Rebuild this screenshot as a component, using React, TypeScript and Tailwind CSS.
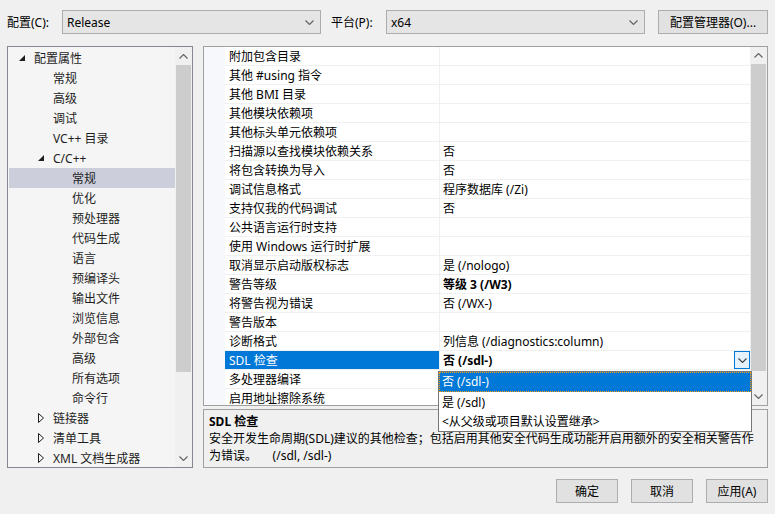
import React from 'react';

const Chevron = ({ up = false, color = '#606060' }: { up?: boolean; color?: string }) => (
    <svg width="9" height="5" viewBox="0 0 9 5" className={up ? 'rotate-180' : ''}>
        <polyline points="0.5,0.5 4.5,4.5 8.5,0.5" fill="none" stroke={color} strokeWidth="1.1" />
    </svg>
);

const Expanded = () => (
    <svg width="6" height="6" viewBox="0 0 6 6">
        <polygon points="6,0 6,6 0,6" fill="#1e1e1e" />
    </svg>
);

const Collapsed = () => (
    <svg width="6" height="10" viewBox="0 0 6 10">
        <polygon points="0.5,0.5 5.5,5 0.5,9.5" fill="none" stroke="#1e1e1e" strokeWidth="1" />
    </svg>
);

type TreeItem = { label: string; level: number; state?: 'open' | 'closed'; selected?: boolean };

const tree: TreeItem[] = [
    { label: '配置属性', level: 0, state: 'open' },
    { label: '常规', level: 1 },
    { label: '高级', level: 1 },
    { label: '调试', level: 1 },
    { label: 'VC++ 目录', level: 1 },
    { label: 'C/C++', level: 1, state: 'open' },
    { label: '常规', level: 2, selected: true },
    { label: '优化', level: 2 },
    { label: '预处理器', level: 2 },
    { label: '代码生成', level: 2 },
    { label: '语言', level: 2 },
    { label: '预编译头', level: 2 },
    { label: '输出文件', level: 2 },
    { label: '浏览信息', level: 2 },
    { label: '外部包含', level: 2 },
    { label: '高级', level: 2 },
    { label: '所有选项', level: 2 },
    { label: '命令行', level: 2 },
    { label: '链接器', level: 1, state: 'closed' },
    { label: '清单工具', level: 1, state: 'closed' },
    { label: 'XML 文档生成器', level: 1, state: 'closed' },
];

const props: { name: string; value?: string; bold?: boolean }[] = [
    { name: '附加包含目录' },
    { name: '其他 #using 指令' },
    { name: '其他 BMI 目录' },
    { name: '其他模块依赖项' },
    { name: '其他标头单元依赖项' },
    { name: '扫描源以查找模块依赖关系', value: '否' },
    { name: '将包含转换为导入', value: '否' },
    { name: '调试信息格式', value: '程序数据库 (/Zi)' },
    { name: '支持仅我的代码调试', value: '否' },
    { name: '公共语言运行时支持' },
    { name: '使用 Windows 运行时扩展' },
    { name: '取消显示启动版权标志', value: '是 (/nologo)' },
    { name: '警告等级', value: '等级 3 (/W3)', bold: true },
    { name: '将警告视为错误', value: '否 (/WX-)' },
    { name: '警告版本' },
    { name: '诊断格式', value: '列信息 (/diagnostics:column)' },
    { name: 'SDL 检查', value: '否 (/sdl-)', bold: true },
    { name: '多处理器编译' },
    { name: '启用地址擦除系统' },
];

const indent = ['pl-[10px]', 'pl-[29px]', 'pl-[48px]'];

function Combo({ text }: { text: string }) {
    return (
        <div className="w-[259px] h-[24px] bg-[#e5e5e5] border border-[#adadad] flex items-center pl-[4px] pr-[6px]">
            <span className="flex-1 pt-[2px]">{text}</span>
            <Chevron />
        </div>
    );
}

function Scrollbar({ topArrow, thumb, rest }: { topArrow: string; thumb: string; rest: string }) {
    return (
        <div className="w-[17px] h-full bg-[#f0f0f0] flex flex-col">
            <div className={`${topArrow} flex items-center justify-center`}>
                <Chevron up />
            </div>
            <div className={`${thumb} mx-[1px] bg-[#cdcdcd]`} />
            <div className={`${rest} flex items-end justify-center pb-[6px]`}>
                <Chevron />
            </div>
        </div>
    );
}

function Button({ label, w = 'w-[110px]' }: { label: string; w?: string }) {
    return (
        <div className={`${w} h-[24px] bg-[#e1e1e1] border border-[#adadad] flex items-center justify-center pt-[2px]`}>
            {label}
        </div>
    );
}

export default function App() {
    return (
        <div className="relative w-[775px] h-[514px] overflow-hidden bg-[#f0f0f0] text-[12px] text-black font-['Noto_Sans','Noto_Sans_CJK_SC',sans-serif]">
            {/* top bar */}
            <div className="flex items-center pt-[10px] h-[34px] pl-[7px]">
                <span className="w-[55px] pt-[2px]">配置(C):</span>
                <Combo text="Release" />
                <span className="w-[55px] ml-[10px] pt-[2px]">平台(P):</span>
                <Combo text="x64" />
                <div className="ml-[13px]">
                    <Button label="配置管理器(O)..." />
                </div>
            </div>

            {/* main */}
            <div className="flex mt-[12px] pl-[7px] h-[422px]">
                {/* tree */}
                <div className="w-[186px] h-full border border-[#828790] bg-[#f5f5f5] flex overflow-hidden">
                    <div className="flex-1 pl-[1px] pt-[1px] text-[#1e1e1e]">
                        {tree.map((t, i) => (
                            <div
                                key={i}
                                className={`h-[20px] flex items-center ${indent[t.level]} ${t.selected ? 'bg-[#cccedb]' : ''}`}
                            >
                                <span className="w-[15px] flex items-center">
                                    {t.state === 'open' && <Expanded />}
                                    {t.state === 'closed' && <Collapsed />}
                                </span>
                                <span className="leading-[18px] pt-[2px]">{t.label}</span>
                            </div>
                        ))}
                    </div>
                    <Scrollbar topArrow="h-[18px]" thumb="h-[307px]" rest="flex-1" />
                </div>

                {/* right */}
                <div className="ml-[10px] w-[565px] h-full flex flex-col">
                    <div className="h-[360px] border border-[#a0a0a0] bg-white flex overflow-hidden">
                        <div className="flex-1 flex">
                            <div className="w-[21px] bg-[#f7f8fc]" />
                            <div className="flex-1">
                                {props.map((p, i) => {
                                    const sel = p.name === 'SDL 检查';
                                    return (
                                        <div key={i} className="h-[19px] flex border-b border-[#f0f0f0]">
                                            <div className={`w-[214px] pl-[4px] pt-[2px] leading-[16px] ${sel ? 'bg-[#0078d7] text-white' : ''}`}>
                                                {p.name}
                                            </div>
                                            <div className="w-[1px] bg-[#f0f0f0]" />
                                            <div className={`flex-1 pl-[3px] flex ${p.bold ? 'font-bold' : ''}`}>
                                                <span className="flex-1 pt-[2px] leading-[16px]">{p.value}</span>
                                                {sel && (
                                                    <div className="w-[16px] h-[18px] border border-[#0078d7] bg-[#e5f1fb] flex items-center justify-center">
                                                        <Chevron color="#404040" />
                                                    </div>
                                                )}
                                            </div>
                                        </div>
                                    );
                                })}
                            </div>
                        </div>
                        <Scrollbar topArrow="h-[17px]" thumb="h-[307px]" rest="flex-1" />
                    </div>

                    <div className="mt-[3px] flex-1 border border-[#a0a0a0] bg-[#f0f0f0] px-[5px] pt-[3px] leading-[17px]">
                        <div className="font-bold">SDL 检查</div>
                        <div>安全开发生命周期(SDL)建议的其他检查；包括启用其他安全代码生成功能并启用额外的安全相关警告作</div>
                        <div className="whitespace-pre">为错误。     (/sdl, /sdl-)</div>
                    </div>
                </div>
            </div>

            {/* buttons */}
            <div className="flex justify-end gap-[13px] pr-[7px] mt-[11px]">
                <Button label="确定" w="w-[62px]" />
                <Button label="取消" w="w-[62px]" />
                <Button label="应用(A)" w="w-[62px]" />
            </div>

            {/* dropdown list */}
            <div className="absolute left-[438px] top-[371px] w-[314px] h-[61px] border border-[#767676] bg-white">
                <div className="h-[20px] leading-[16px] pt-[1px] pl-[2px] bg-[#0078d7] text-white border border-dotted border-[#f5a000]">
                    否 (/sdl-)
                </div>
                <div className="h-[20px] leading-[16px] pt-[3px] pl-[3px]">是 (/sdl)</div>
                <div className="h-[19px] leading-[16px] pt-[2px] pl-[3px]">&lt;从父级或项目默认设置继承&gt;</div>
            </div>
        </div>
    );
}
